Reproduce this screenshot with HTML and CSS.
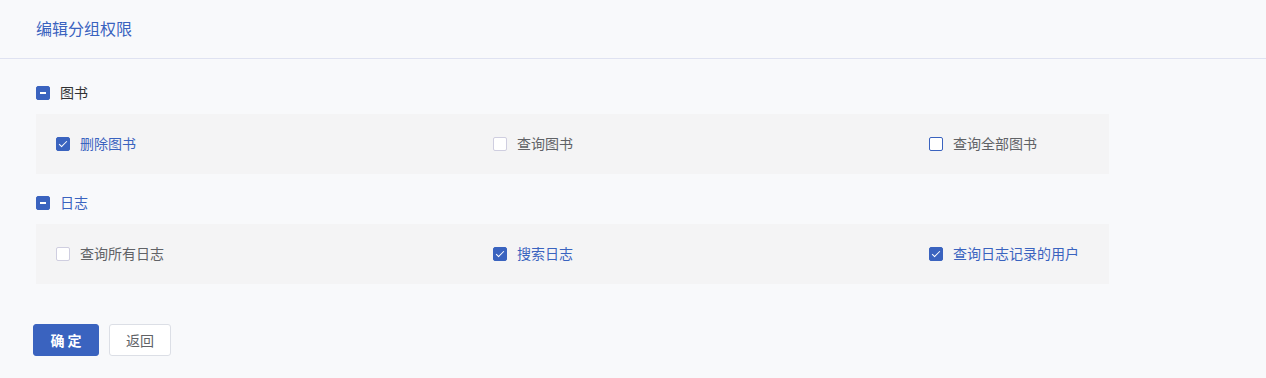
FILE: index.html
```html
<!DOCTYPE html>
<html lang="zh-CN">
<head>
<meta charset="utf-8">
<title>编辑分组权限</title>
<link rel="stylesheet" href="styles.css">
</head>
<body>
<div class="header"><span class="title">编辑分组权限</span></div>
<div class="content">
  <div class="group-head">
    <span class="cb cb-indeterminate"></span>
    <span class="label">图书</span>
  </div>
  <div class="panel">
    <div class="item"><span class="cb cb-checked"></span><span class="label label-on">删除图书</span></div>
    <div class="item"><span class="cb"></span><span class="label">查询图书</span></div>
    <div class="item"><span class="cb cb-focus"></span><span class="label">查询全部图书</span></div>
  </div>
  <div class="group-head second">
    <span class="cb cb-indeterminate"></span>
    <span class="label label-on">日志</span>
  </div>
  <div class="panel">
    <div class="item"><span class="cb"></span><span class="label">查询所有日志</span></div>
    <div class="item"><span class="cb cb-checked"></span><span class="label label-on">搜索日志</span></div>
    <div class="item"><span class="cb cb-checked"></span><span class="label label-on">查询日志记录的用户</span></div>
  </div>
  <div class="actions">
    <button class="btn btn-primary">确 定</button>
    <button class="btn btn-default">返回</button>
  </div>
</div>
</body>
</html>
```
FILE: styles.css
```css
* { box-sizing: border-box; }
body {
  margin: 0;
  background: #f8f9fb;
  font-family: "Noto Sans CJK SC", "Noto Sans", sans-serif;
  color: #606266;
  font-size: 14px;
}
.header {
  height: 59px;
  border-bottom: 1px solid #dfe2f1;
  padding-left: 36px;
  display: flex;
  align-items: center;
}
.title {
  color: #3a63bf;
  font-size: 16px;
  line-height: 22px;
  padding-bottom: 2px;
}
.content {
  width: 1109px;
  padding-left: 36px;
}
.group-head {
  margin-top: 24px;
  height: 20px;
  display: flex;
  align-items: center;
}
.group-head .label { color: #303133; }
.group-head .label.label-on { color: #3a63bf; }
.group-head.second { margin-top: 19px; }
.panel {
  margin-top: 11px;
  height: 60px;
  background: #f4f4f5;
  padding-left: 20px;
  display: grid;
  grid-template-columns: 437px 436px auto;
  align-items: center;
}
.item {
  display: flex;
  align-items: center;
}
.cb {
  width: 14px;
  height: 14px;
  border: 1px solid #cfcee0;
  border-radius: 2px;
  background: #fff;
  position: relative;
  flex: none;
}
.cb-focus { border-color: #3a63bf; }
.cb-checked, .cb-indeterminate {
  background: #3a63bf;
  border-color: #3a63bf;
}
.cb-checked::after {
  content: "";
  position: absolute;
  left: 4px;
  top: 1px;
  width: 3px;
  height: 7px;
  border: 1px solid #fff;
  border-left: 0;
  border-top: 0;
  transform: rotate(45deg);
}
.cb-indeterminate::after {
  content: "";
  position: absolute;
  left: 3px;
  right: 3px;
  top: 5px;
  height: 2px;
  background: #fff;
}
.label {
  margin-left: 10px;
  line-height: 18px;
  padding-bottom: 2px;
  color: #606266;
}
.label-on { color: #3a63bf; }
.actions {
  margin-top: 40px;
  margin-left: -3px;
  display: flex;
  gap: 10px;
}
.btn {
  height: 32px;
  border-radius: 3px;
  font-family: inherit;
  font-size: 14px;
  padding: 0 0 1px;
  cursor: pointer;
}
.btn-primary {
  width: 66px;
  background: #3a63bf;
  border: 1px solid #3a63bf;
  color: #fff;
  font-weight: 700;
}
.btn-default {
  width: 62px;
  background: #fff;
  border: 1px solid #dcdfe6;
  color: #606266;
}
```
